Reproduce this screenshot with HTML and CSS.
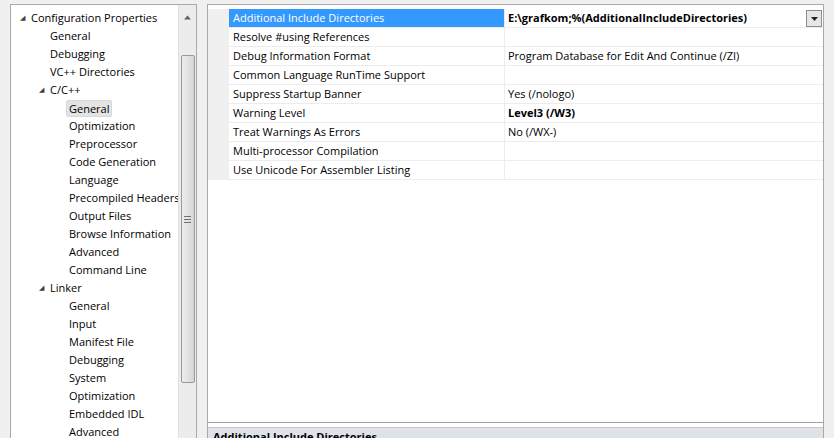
FILE: index.html
```html
<!DOCTYPE html>
<html>
<head>
<meta charset="utf-8">
<link rel="stylesheet" href="styles.css">
</head>
<body>
<div class="page">
  <div class="tree">
    <div class="tree-list">
      <div class="node l0"><span class="tw">&#9698;</span><span class="lbl">Configuration Properties</span></div>
      <div class="node l1"><span class="lbl">General</span></div>
      <div class="node l1"><span class="lbl">Debugging</span></div>
      <div class="node l1"><span class="lbl">VC++ Directories</span></div>
      <div class="node l1x"><span class="tw">&#9698;</span><span class="lbl">C/C++</span></div>
      <div class="node l2"><span class="lbl sel">General</span></div>
      <div class="node l2"><span class="lbl">Optimization</span></div>
      <div class="node l2"><span class="lbl">Preprocessor</span></div>
      <div class="node l2"><span class="lbl">Code Generation</span></div>
      <div class="node l2"><span class="lbl">Language</span></div>
      <div class="node l2"><span class="lbl">Precompiled Headers</span></div>
      <div class="node l2"><span class="lbl">Output Files</span></div>
      <div class="node l2"><span class="lbl">Browse Information</span></div>
      <div class="node l2"><span class="lbl">Advanced</span></div>
      <div class="node l2"><span class="lbl">Command Line</span></div>
      <div class="node l1x"><span class="tw">&#9698;</span><span class="lbl">Linker</span></div>
      <div class="node l2"><span class="lbl">General</span></div>
      <div class="node l2"><span class="lbl">Input</span></div>
      <div class="node l2"><span class="lbl">Manifest File</span></div>
      <div class="node l2"><span class="lbl">Debugging</span></div>
      <div class="node l2"><span class="lbl">System</span></div>
      <div class="node l2"><span class="lbl">Optimization</span></div>
      <div class="node l2"><span class="lbl">Embedded IDL</span></div>
      <div class="node l2"><span class="lbl">Advanced</span></div>
    </div>
    <div class="vscroll">
      <div class="arrow-up">
        <svg width="9" height="5" viewBox="0 0 9 5"><path d="M4.5 0.5 L8 4.5 L1 4.5 Z" fill="#606060"/></svg>
      </div>
      <div class="thumb">
        <svg class="grip" width="7" height="7" viewBox="0 0 7 7"><path d="M0 0.5H7M0 3.5H7M0 6.5H7" stroke="#707070" stroke-width="1"/></svg>
      </div>
    </div>
  </div>
  <div class="props">
    <div class="grid">
      <div class="row selected">
        <div class="gutter"></div>
        <div class="name">Additional Include Directories</div>
        <div class="value bold">E:\grafkom;%(AdditionalIncludeDirectories)
          <span class="dd"><svg width="7" height="4" viewBox="0 0 7 4"><path d="M0 0H7L3.5 4Z" fill="#222"/></svg></span>
        </div>
      </div>
      <div class="row"><div class="gutter"></div><div class="name">Resolve #using References</div><div class="value"></div></div>
      <div class="row"><div class="gutter"></div><div class="name">Debug Information Format</div><div class="value">Program Database for Edit And Continue (/ZI)</div></div>
      <div class="row"><div class="gutter"></div><div class="name">Common Language RunTime Support</div><div class="value"></div></div>
      <div class="row"><div class="gutter"></div><div class="name">Suppress Startup Banner</div><div class="value">Yes (/nologo)</div></div>
      <div class="row"><div class="gutter"></div><div class="name">Warning Level</div><div class="value bold">Level3 (/W3)</div></div>
      <div class="row"><div class="gutter"></div><div class="name">Treat Warnings As Errors</div><div class="value">No (/WX-)</div></div>
      <div class="row"><div class="gutter"></div><div class="name">Multi-processor Compilation</div><div class="value"></div></div>
      <div class="row"><div class="gutter"></div><div class="name">Use Unicode For Assembler Listing</div><div class="value"></div></div>
    </div>
    <div class="desc">
      <div class="desc-title">Additional Include Directories</div>
    </div>
  </div>
</div>
</body>
</html>
```
FILE: styles.css
```css
html, body {
  margin: 0;
  padding: 0;
  background: #f0f0f0;
  font-family: "Open Sans", "Noto Sans", sans-serif;
  font-size: 11px;
  color: #000;
  overflow: hidden;
}
.page {
  display: flex;
  height: 438px;
  padding: 4px 0 0 10px;
  box-sizing: border-box;
  gap: 10px;
  overflow: hidden;
}
.tree {
  width: 187px;
  flex: none;
  height: 460px;
  background: #fff;
  border: 1px solid #a9a9a9;
  border-bottom: none;
  box-sizing: border-box;
  display: flex;
}
.tree-list {
  flex: 1;
  padding-top: 4px;
  overflow: hidden;
  white-space: nowrap;
}
.node {
  height: 18px;
  line-height: 18px;
  display: flex;
  align-items: center;
}
.node.l0 { padding-left: 9px; }
.node.l1 { padding-left: 36px; }
.node.l1x { padding-left: 28px; }
.node.l2 { padding-left: 55px; }
.tw {
  font-size: 7px;
  color: #404040;
  width: 8px;
  display: inline-block;
  line-height: 18px;
}
.lbl { padding: 0 3px; }
.lbl.sel {
  background: #e4e4e4;
  border: 1px solid #d8d8d8;
  border-radius: 2px;
  line-height: 15px;
  padding: 0 2px;
}
.vscroll {
  width: 17px;
  flex: none;
  background: #ececec;
  border-left: 1px solid #e0e0e0;
  display: flex;
  flex-direction: column;
  align-items: center;
}
.arrow-up {
  height: 17px;
  display: flex;
  align-items: center;
  justify-content: center;
  margin-top: 4px;
}
.thumb {
  margin-top: 29px;
  width: 14px;
  height: 328px;
  box-sizing: border-box;
  border: 1px solid #9a9a9a;
  border-radius: 2px;
  background: linear-gradient(to right, #ececec, #e2e2e2 50%, #d6d6d6);
  display: flex;
  align-items: center;
  justify-content: center;
}
.grip { margin-right: 1px; }
.props {
  width: 617px;
  flex: none;
  height: 460px;
  display: flex;
  flex-direction: column;
  border: 1px solid #a9a9a9;
  border-bottom: none;
  box-sizing: border-box;
  background: #fff;
}
.grid {
  height: 418px;
  flex: none;
  padding-top: 4px;
  box-sizing: border-box;
  border-bottom: 1px solid #a0a0a0;
}
.row {
  display: flex;
  height: 19px;
  line-height: 18px;
  white-space: nowrap;
}
.gutter {
  width: 21px;
  flex: none;
  background: #f0f0f0;
}
.name {
  width: 276px;
  flex: none;
  padding-left: 4px;
  box-sizing: border-box;
  border-bottom: 1px solid #ececec;
  border-right: 1px solid #ececec;
}
.value {
  flex: 1;
  padding-left: 3px;
  border-bottom: 1px solid #ececec;
  position: relative;
}
.bold { font-weight: 700; }
.row.selected .name {
  background: #3399ff;
  color: #fff;
}
.dd {
  position: absolute;
  right: 1px;
  top: 1px;
  width: 14px;
  height: 15px;
  border: 1px solid #8c8c8c;
  background: #e6e6e6;
  display: flex;
  align-items: center;
  justify-content: center;
}
.desc {
  margin-top: 4px;
  border-top: 1px solid #c8c8c8;
  background: #dfe2e8;
  flex: 1;
  padding: 1px 5px;
}
.desc-title {
  font-weight: 700;
  line-height: 16px;
}
```
